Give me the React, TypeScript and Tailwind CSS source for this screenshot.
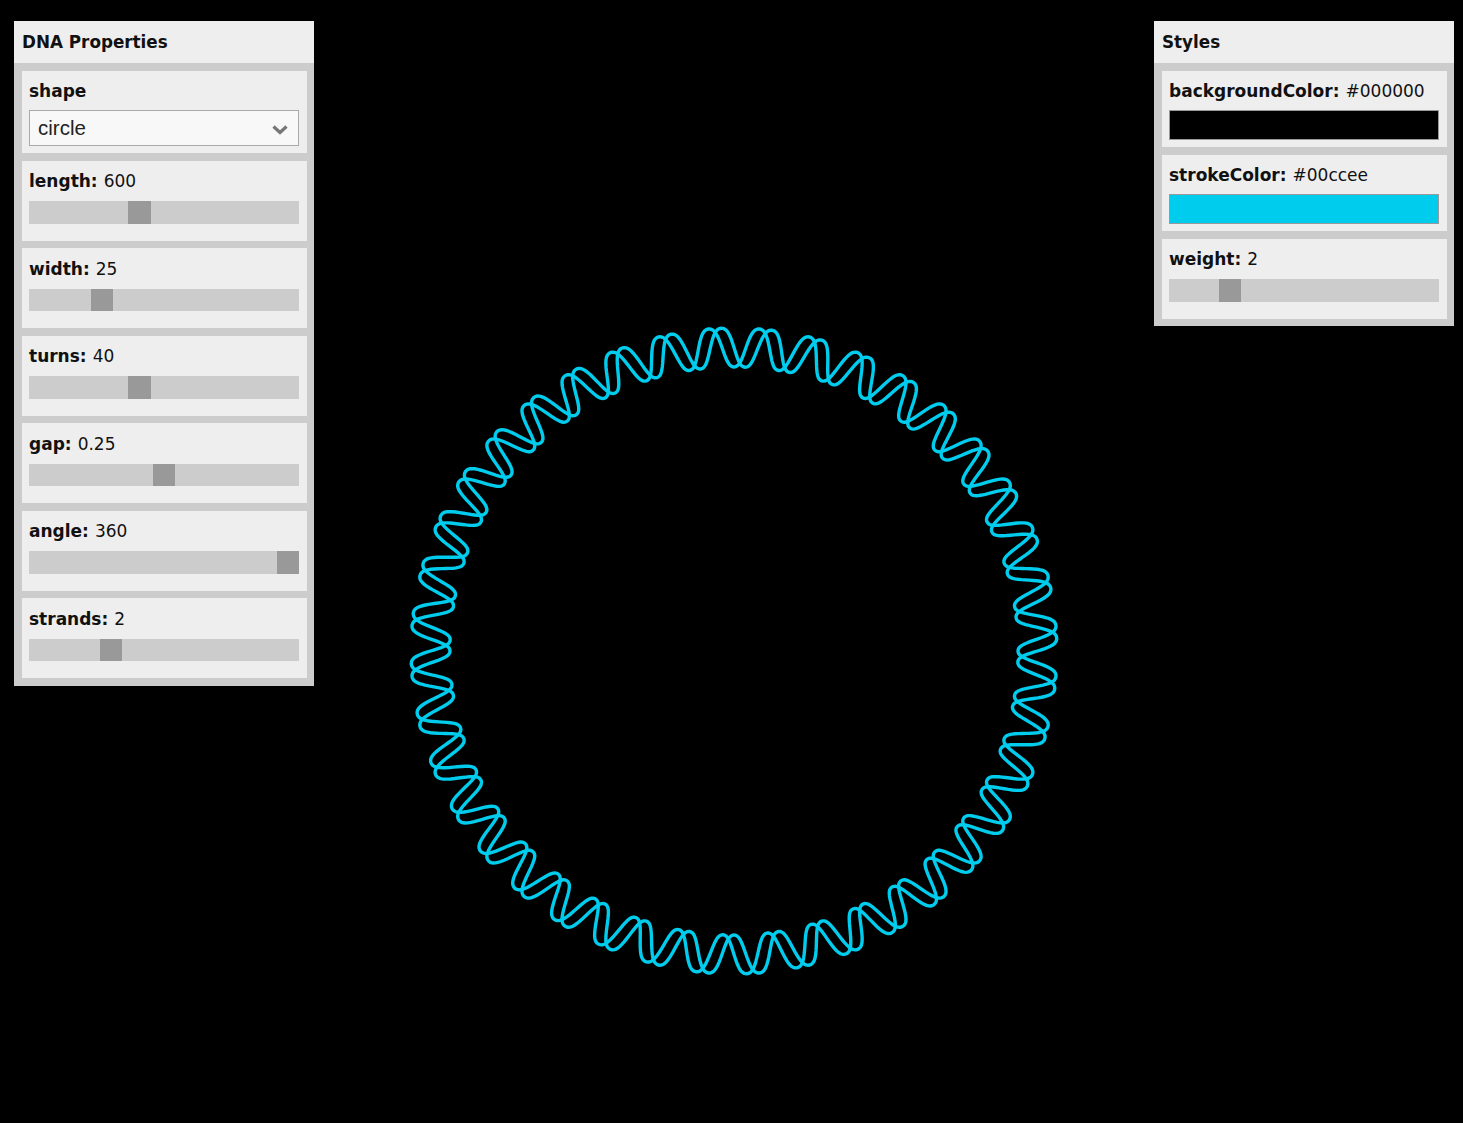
const FONT = "font-['DejaVu_Sans',sans-serif]";

const DNA_SLIDERS = [
  { label: "length", value: 600, min: 0, max: 1500, step: 1 },
  { label: "width", value: 25, min: 0, max: 100, step: 1 },
  { label: "turns", value: 40, min: 0, max: 100, step: 1 },
  { label: "gap", value: 0.25, min: 0, max: 0.5, step: 0.01 },
  { label: "angle", value: 360, min: 0, max: 360, step: 1 },
  { label: "strands", value: 2, min: 0, max: 7, step: 1 },
];

// two wave strands wrapped round a circle, a quarter turn apart
function strandPath(offset: number) {
  const cx = 734;
  const cy = 651;
  const radius = 303.5;
  const amp = 20.7;
  const turns = 40;
  const steps = 1600;
  const pts: string[] = [];
  for (let i = 0; i <= steps; i++) {
    const a = (i / steps) * Math.PI * 2;
    const x = turns * a + offset;
    const r = radius + amp * (Math.sin(x) + 0.06 * Math.sin(3 * x));
    pts.push(`${(cx + r * Math.cos(a)).toFixed(2)},${(cy + r * Math.sin(a)).toFixed(2)}`);
  }
  return "M" + pts.join("L") + "Z";
}

function Label({ name, value, className }: { name: string; value?: string | number; className: string }) {
  return (
    <div className={`text-[17px] leading-[22px] text-[#111] ${className}`}>
      <b className="font-bold">{name}{value !== undefined ? ":" : ""}</b>
      {value !== undefined ? <span className="ml-[6px] font-normal">{value}</span> : null}
    </div>
  );
}

function Slider({ label, value, min, max, step }: { label: string; value: number; min: number; max: number; step: number }) {
  return (
    <div className="mt-[7.5px] h-[80px] bg-[#eeeeee] pl-[7px] pr-[8px]">
      <Label name={label} value={value} className="h-[40.5px] pt-[9.5px]" />
      <input
        type="range"
        defaultValue={value}
        min={min}
        max={max}
        step={step}
        className="block h-[22.5px] w-full cursor-pointer appearance-none bg-[#cccccc] [&::-webkit-slider-thumb]:h-[22.5px] [&::-webkit-slider-thumb]:w-[22.5px] [&::-webkit-slider-thumb]:appearance-none [&::-webkit-slider-thumb]:bg-[#999999]"
      />
    </div>
  );
}

function Swatch({ label, value, className }: { label: string; value: string; className: string }) {
  return (
    <div className="mt-[8px] h-[76px] bg-[#eeeeee] pl-[7px] pr-[8px]">
      <Label name={label} value={value} className="h-[39px] pt-[9px]" />
      <div className={`h-[30px] border border-[#999999] ${className}`} />
    </div>
  );
}

function Panel({ title, pad, children }: { title: string; pad: string; children: React.ReactNode }) {
  return (
    <section className="relative z-10 w-[300px] bg-[#cccccc]">
      <h2 className="h-[42px] bg-[#eeeeee] px-[8px] text-[16.8px] font-bold leading-[42px] text-[#111]">{title}</h2>
      <div className={`pl-[8px] pr-[7px] ${pad}`}>{children}</div>
    </section>
  );
}

export default function App() {
  return (
    <div className={`relative flex h-[1123px] items-start justify-between bg-black pl-[14px] pr-[9px] pt-[21px] ${FONT}`}>
      <svg className="absolute inset-0" width="1463" height="1123" fill="none" stroke="#00ccee" strokeWidth="3.4">
        <path d={strandPath(Math.PI)} />
        <path d={strandPath(Math.PI * 1.5)} />
      </svg>

      <Panel title="DNA Properties" pad="pb-[8px]">
        <div className="mt-[8px] h-[82px] bg-[#eeeeee] pl-[7px] pr-[8px]">
          <Label name="shape" className="h-[39px] pt-[9px]" />
          <div className="relative">
            <select
              defaultValue="circle"
              className="block h-[36px] w-full appearance-none border border-[#aaaaaa] bg-[#f8f8f8] pl-[8px] font-['Liberation_Sans',sans-serif] text-[20.5px] text-[#222]"
            >
              <option>circle</option>
            </select>
            <svg className="pointer-events-none absolute right-[11px] top-[15px]" width="16" height="10" viewBox="0 0 16 10" fill="none" stroke="#777777" strokeWidth="3.2">
              <path d="M1.5 1.5 8 7.5 14.5 1.5" />
            </svg>
          </div>
        </div>
        {DNA_SLIDERS.map((s) => (
          <Slider key={s.label} {...s} />
        ))}
      </Panel>

      <Panel title="Styles" pad="pb-[7.5px]">
        <Swatch label="backgroundColor" value="#000000" className="bg-black" />
        <Swatch label="strokeColor" value="#00ccee" className="bg-[#00ccee]" />
        <Slider label="weight" value={2} min={0} max={10} step={1} />
      </Panel>
    </div>
  );
}
